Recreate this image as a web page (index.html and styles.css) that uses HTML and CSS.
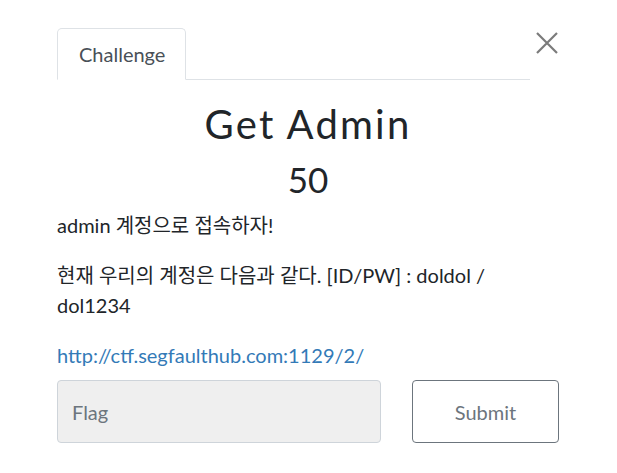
FILE: index.html
```html
<!DOCTYPE html>
<html lang="ko">
<head>
<meta charset="utf-8">
<title>Get Admin</title>
<link rel="stylesheet" href="styles.css">
</head>
<body>
<div class="modal">
  <div class="head">
    <ul class="tabs">
      <li class="tab">Challenge</li>
    </ul>
    <button class="close" aria-label="Close">
      <svg width="24" height="24" viewBox="0 0 24 24"><path d="M2 2 L22 22 M22 2 L2 22" stroke="#7b7b7b" stroke-width="2.2" fill="none"/></svg>
    </button>
  </div>
  <h2 class="name">Get Admin</h2>
  <h3 class="value">50</h3>
  <div class="desc">
    <p>admin 계정으로 접속하자!</p>
    <p>현재 우리의 계정은 다음과 같다. [ID/PW] : doldol / dol1234</p>
    <p class="last"><a href="#">http://ctf.segfaulthub.com:1129/2/</a></p>
  </div>
  <form class="submit-row">
    <input class="flag" type="text" placeholder="Flag">
    <button class="btn" type="button">Submit</button>
  </form>
</div>
</body>
</html>
```

FILE: styles.css
```css
html, body {
  margin: 0;
  padding: 0;
  background: #ffffff;
}
body {
  font-family: "Lato", "Noto Sans CJK KR", sans-serif;
  font-size: 20px;
  line-height: 30px;
  color: #212529;
}
.modal {
  width: 502px;
  margin-left: 57px;
  padding-top: 28px;
}
.head {
  display: flex;
  align-items: flex-start;
}
.tabs {
  flex: 1;
  display: flex;
  margin: 0;
  padding: 0;
  list-style: none;
  border-bottom: 1px solid #dee2e6;
}
.tab {
  padding: 10px 20px 10px 21px;
  margin-bottom: -1px;
  border: 1px solid #dee2e6;
  border-bottom-color: #ffffff;
  border-radius: 5px 5px 0 0;
  color: #495057;
  background: #fff;
  line-height: 30px;
}
.close {
  width: 29px;
  height: 30px;
  padding: 0;
  margin: 3px 0 0;
  border: 0;
  background: transparent;
  display: flex;
  justify-content: flex-end;
}
.name {
  margin: 0 0 10px;
  padding-top: 20px;
  text-align: center;
  font-size: 40px;
  line-height: 48px;
  font-weight: 400;
  letter-spacing: 2.2px;
}
.value {
  margin: 0 0 10px;
  text-align: center;
  font-size: 35px;
  line-height: 42px;
  font-weight: 400;
}
.desc p {
  margin: 0 0 20px;
}
.desc p.last {
  margin-bottom: 10px;
}
.desc a {
  color: #337ab7;
  text-decoration: none;
}
.submit-row {
  display: grid;
  grid-template-columns: 324px 147px;
  column-gap: 31px;
  margin: 0;
}
.flag {
  box-sizing: border-box;
  height: 63px;
  padding: 0 14px;
  border: 1px solid #ced4da;
  border-radius: 4px;
  background: #efefef;
  font-family: "Lato", sans-serif;
  font-size: 20px;
  color: #495057;
  outline: none;
}
.flag::placeholder {
  color: #6c757d;
  opacity: 1;
}
.btn {
  box-sizing: border-box;
  height: 63px;
  border: 1px solid #6c757d;
  border-radius: 4px;
  background: #fff;
  color: #6c757d;
  font-family: "Lato", sans-serif;
  font-size: 20px;
}
```
